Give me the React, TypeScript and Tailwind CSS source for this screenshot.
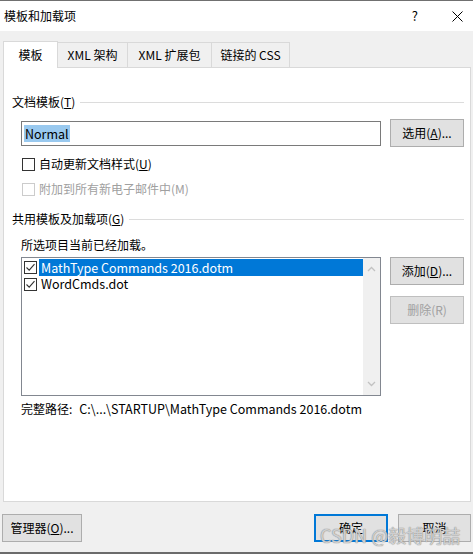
import React from "react";

const font = { fontFamily: '"Noto Sans CJK SC", "Microsoft YaHei", sans-serif' };

function Check({ checked, disabled }: { checked?: boolean; disabled?: boolean }) {
  return (
    <div
      className={`w-[13px] h-[13px] border bg-white flex items-center justify-center shrink-0 ${
        disabled ? "border-[#cccccc]" : "border-[#333333]"
      }`}
    >
      {checked && (
        <svg width="11" height="11" viewBox="0 0 11 11">
          <path d="M1.5 5.5 L4.2 8.2 L9.5 2.2" fill="none" stroke="#333" strokeWidth="1.1" />
        </svg>
      )}
    </div>
  );
}

function Btn({ children, w, disabled, def }: { children: React.ReactNode; w: string; disabled?: boolean; def?: boolean }) {
  return (
    <div
      className={`${w} h-[28px] flex items-center justify-center bg-[#e1e1e1] text-[12px] ${
        def ? "border-2 border-[#0078d7]" : "border border-[#adadad]"
      } ${disabled ? "text-[#a0a0a0] border-[#bfbfbf] bg-[#cccccc]/40" : "text-black"}`}
    >
      {children}
    </div>
  );
}

function Heading({ children }: { children: React.ReactNode }) {
  return (
    <div className="flex items-center h-[16px] pl-[8px] pr-[6px]">
      <span className="text-[12px] leading-[16px] whitespace-nowrap">{children}</span>
      <div className="flex-1 h-px bg-[#dcdcdc] ml-[5px]" />
    </div>
  );
}

export default function App() {
  return (
    <div style={font} className="relative w-[473px] h-[554px] bg-[#f0f0f0] text-black overflow-hidden flex flex-col">
      <div className="h-px bg-[#707070]" />
      <div className="h-[30px] bg-white flex items-center pl-[4px] pr-[10px]">
        <span className="text-[12px] flex-1">模板和加载项</span>
        <span className="text-[13px] mr-[34px]">?</span>
        <svg width="11" height="11" viewBox="0 0 11 11">
          <path d="M0.5 0.5 L10.5 10.5 M10.5 0.5 L0.5 10.5" stroke="#000" strokeWidth="1" />
        </svg>
      </div>
      <div className="pt-[10px] pl-[3px] pr-[2px]">
        <div className="flex items-end h-[26px] relative z-10">
          <div className="w-[55px] h-[27px] bg-white border border-b-0 border-[#d9d9d9] flex items-center justify-center text-[12px] -mb-px">
            模板
          </div>
          <div className="w-[70px] h-[25px] border border-l-0 border-b-0 border-[#d9d9d9] flex items-center justify-center text-[12px]">
            XML 架构
          </div>
          <div className="w-[84px] h-[25px] border border-l-0 border-b-0 border-[#d9d9d9] flex items-center justify-center text-[12px]">
            XML 扩展包
          </div>
          <div className="w-[78px] h-[25px] border border-l-0 border-b-0 border-[#d9d9d9] flex items-center justify-center text-[12px]">
            链接的 CSS
          </div>
        </div>
        <div className="h-[435px] bg-white border border-[#d9d9d9] flex flex-col">
          <div className="mt-[26px]">
            <Heading>
              文档模板(<span className="underline">T</span>)
            </Heading>
          </div>
          <div className="flex mt-[9px] pl-[17px]">
            <div className="w-[360px] h-[25px] mt-[2px] border border-[#7a7a7a] flex items-center pl-[2px]">
              <span className="bg-[#99c9ef] text-[12.5px] leading-[17px] px-px">Normal</span>
            </div>
            <div className="ml-[9px]">
              <Btn w="w-[74px]">
                选用(<span className="underline">A</span>)...
              </Btn>
            </div>
          </div>
          <div className="flex items-center h-[16px] mt-[9px] pl-[18px] gap-[4px] text-[12px]">
            <Check />
            <span>
              自动更新文档样式(<span className="underline">U</span>)
            </span>
          </div>
          <div className="flex items-center h-[16px] mt-[9px] pl-[18px] gap-[4px] text-[12px] text-[#a0a0a0]">
            <Check disabled />
            <span>附加到所有新电子邮件中(M)</span>
          </div>
          <div className="mt-[14px]">
            <Heading>
              共用模板及加载项(<span className="underline">G</span>)
            </Heading>
          </div>
          <div className="mt-[10px] pl-[17px] text-[12px] leading-[16px]">所选项目当前已经加载。</div>
          <div className="flex mt-[4px] pl-[17px]">
            <div className="w-[360px] h-[139px] border border-[#828790] flex">
              <div className="flex-1 pt-[1px] pl-[2px]">
                <div className="flex items-center h-[17px]">
                  <Check checked />
                  <div className="ml-[2px] flex-1 h-[17px] bg-[#0078d7] text-white text-[12.5px] leading-[17px] pl-[2px]">
                    MathType Commands 2016.dotm
                  </div>
                </div>
                <div className="flex items-center h-[16px]">
                  <Check checked />
                  <div className="ml-[2px] text-[12.5px] leading-[16px] pl-[2px]">WordCmds.dot</div>
                </div>
              </div>
              <div className="w-[17px] bg-[#f0f0f0] flex flex-col items-center justify-between py-[8px]">
                <svg width="9" height="6" viewBox="0 0 9 6">
                  <path d="M1 5 L4.5 1.5 L8 5" fill="none" stroke="#c2c2c2" strokeWidth="1.3" />
                </svg>
                <svg width="9" height="6" viewBox="0 0 9 6">
                  <path d="M1 1 L4.5 4.5 L8 1" fill="none" stroke="#c2c2c2" strokeWidth="1.3" />
                </svg>
              </div>
            </div>
            <div className="ml-[9px] flex flex-col gap-[11px]">
              <Btn w="w-[74px]">
                添加(<span className="underline">D</span>)...
              </Btn>
              <Btn w="w-[74px]" disabled>
                删除(R)
              </Btn>
            </div>
          </div>
          <div className="mt-[5px] pl-[17px] text-[12px] leading-[16px] flex">
            <span>完整路径:</span>
            <span className="ml-[7px] text-[12.5px]">C:\...\STARTUP\MathType Commands 2016.dotm</span>
          </div>
        </div>
      </div>
      <div className="flex mt-[12px] pl-[2px] pr-[2px]">
        <Btn w="w-[80px]">
          管理器(<span className="underline">O</span>)...
        </Btn>
        <div className="flex-1" />
        <Btn w="w-[74px]" def>
          确定
        </Btn>
        <div className="ml-[10px]">
          <Btn w="w-[73px]">取消</Btn>
        </div>
      </div>
      <div className="flex-1" />
      <div className="h-[2px] bg-[#6b6b6b]" />
      <div
        className="absolute left-[320px] top-[524px] text-[18px] leading-[22px] text-[rgba(255,255,255,0.6)] whitespace-nowrap"
        style={{ textShadow: "0 0 1px #888, 0 0 1px #888" }}
      >
        CSDN @毅博明喆
      </div>
    </div>
  );
}
